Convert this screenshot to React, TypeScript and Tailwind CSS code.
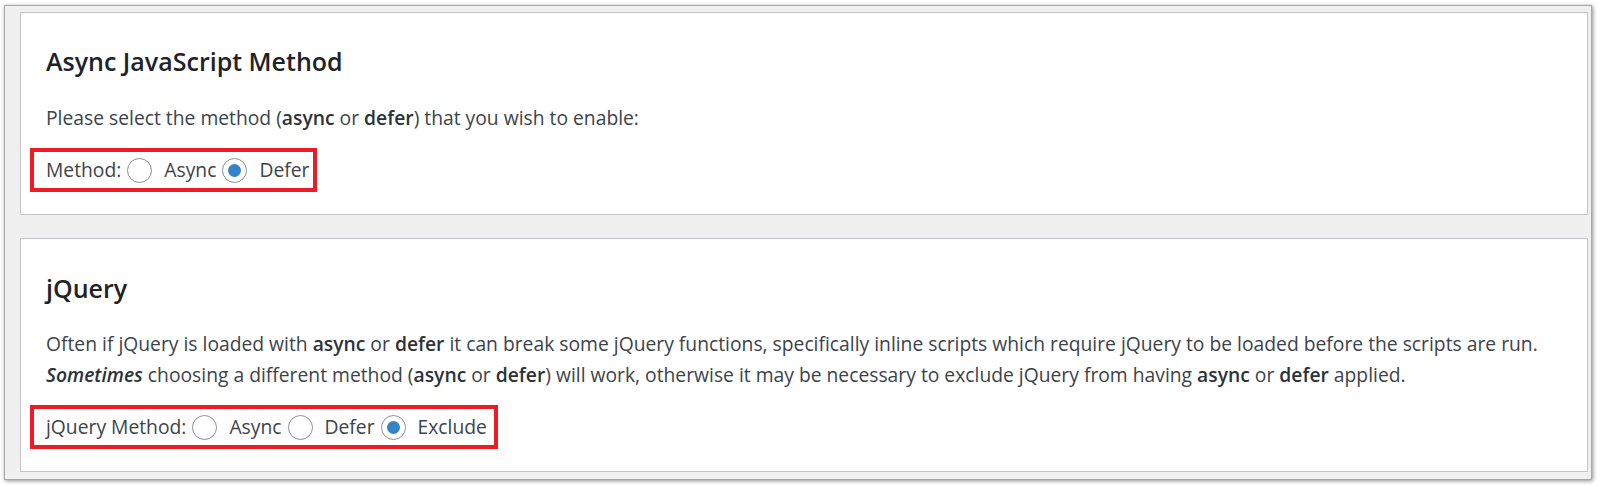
import React from "react";

const font = { fontFamily: '"Open Sans", "Noto Sans", sans-serif' };

function Radio({ checked }: { checked?: boolean }) {
  return (
    <span className="inline-flex h-[25px] w-[25px] shrink-0 items-center justify-center rounded-full border border-[#8c8f94] bg-white">
      {checked ? <span className="h-[13px] w-[13px] rounded-full bg-[#3582c4]" /> : null}
    </span>
  );
}

function Option({ label, checked }: { label: string; checked?: boolean }) {
  return (
    <span className="inline-flex items-center">
      <span className="ml-[6px] mr-[12px] inline-flex">
        <Radio checked={checked} />
      </span>
      <span>{label}</span>
    </span>
  );
}

export default function App() {
  return (
    <div
      className="h-[486px] w-[1600px] overflow-hidden bg-white pl-[4px] pt-[5px]"
      style={font}
    >
      <div className="h-[475px] w-[1588px] border border-[#a8a8a8] bg-[#f0f0f0] pl-[15px] pr-[3px] pt-[6px] shadow-[1px_1px_4px_rgba(0,0,0,0.45)]">
        <div className="h-[203px] border border-[#c3c4c7] bg-white pl-[25px] pt-[32px]">
          <h2 className="h-[32px] text-[25px] font-semibold leading-[32px] text-[#1d2327]">
            Async JavaScript Method
          </h2>
          <p className="mt-[25px] text-[19.3px] leading-[31px] text-[#3c434a]">
            Please select the method (<b className="font-semibold text-[#2c3338]">async</b> or{" "}
            <b className="font-semibold text-[#2c3338]">defer</b>) that you wish to enable:
          </p>
          <div className="-ml-[16px] mt-[15px] inline-flex h-[44px] items-center border-[4px] border-[#ed1c24] pl-[12px] pr-[4px] text-[19.3px] text-[#3c434a]">
            <span>Method:</span>
            <Option label="Async" />
            <Option label="Defer" checked />
          </div>
        </div>
        <div className="mt-[23px] h-[234px] border border-[#c3c4c7] bg-white pl-[25px] pt-[33px]">
          <h2 className="h-[32px] text-[25px] font-semibold leading-[32px] text-[#1d2327]">
            jQuery
          </h2>
          <p className="mt-[24px] text-[19.3px] leading-[31px] text-[#3c434a]">
            Often if jQuery is loaded with <b className="font-semibold text-[#2c3338]">async</b> or{" "}
            <b className="font-semibold text-[#2c3338]">defer</b> it can break some jQuery functions,
            specifically inline scripts which require jQuery to be loaded before the scripts are run.
            <br />
            <i className="font-semibold text-[#2c3338]">Sometimes</i> choosing a different method (
            <b className="font-semibold text-[#2c3338]">async</b> or{" "}
            <b className="font-semibold text-[#2c3338]">defer</b>) will work, otherwise it may be
            necessary to exclude jQuery from having{" "}
            <b className="font-semibold text-[#2c3338]">async</b> or{" "}
            <b className="font-semibold text-[#2c3338]">defer</b> applied.
          </p>
          <div className="-ml-[16px] mt-[15px] inline-flex h-[44px] items-center border-[4px] border-[#ed1c24] pl-[12px] pr-[7px] text-[19.3px] text-[#3c434a]">
            <span>jQuery Method:</span>
            <Option label="Async" />
            <Option label="Defer" />
            <Option label="Exclude" checked />
          </div>
        </div>
      </div>
    </div>
  );
}
